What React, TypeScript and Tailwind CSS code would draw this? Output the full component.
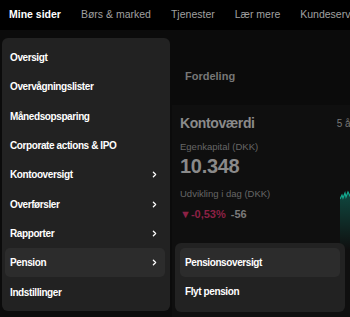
import { ChevronRight } from 'lucide-react';

const NAV = ['Børs & marked', 'Tjenester', 'Lær mere', 'Kundeservice'];

const MENU: { label: string; sub?: boolean; active?: boolean }[] = [
  { label: 'Oversigt' },
  { label: 'Overvågningslister' },
  { label: 'Månedsopsparing' },
  { label: 'Corporate actions & IPO' },
  { label: 'Kontooversigt', sub: true },
  { label: 'Overførsler', sub: true },
  { label: 'Rapporter', sub: true },
  { label: 'Pension', sub: true, active: true },
  { label: 'Indstillinger' },
];

export default function App() {
  return (
    <div className="relative w-[350px] h-[317px] overflow-hidden bg-[#0b0b0b] font-['Liberation_Sans',Arial,sans-serif]">
      {/* top nav */}
      <div className="h-[30px] bg-black flex items-center pl-[9px] gap-[20px] whitespace-nowrap text-[10.5px]">
        <span className="font-bold text-white">Mine sider</span>
        {NAV.map(n => (
          <span key={n} className="text-[#a0a0a0]">{n}</span>
        ))}
      </div>

      {/* dimmed page behind the menu */}
      <div className="flex">
        <div className="w-[172px] shrink-0" />
        <div className="flex-1 min-w-0">
          <div className="h-[75px] flex items-center pl-[13px] pt-[18px]">
            <span className="text-[11px] text-[#777] font-bold">Fordeling</span>
          </div>
          <div className="bg-[#0f0f0f] h-[220px] pl-[8px] pt-[8px]">
            <div className="flex items-center justify-between">
              <span className="text-[14px] font-bold text-[#8a8a8a] tracking-[-0.4px]">Kontoværdi</span>
              <span className="text-[10px] text-[#777] -mr-[4px]">5 år</span>
            </div>
            <div className="mt-[6px] text-[9.5px] text-[#666]">Egenkapital (DKK)</div>
            <div className="text-[20px] leading-[24px] font-bold text-[#8a8a8a] tracking-[-0.3px]">10.348</div>
            <div className="flex">
              <div className="flex-1">
                <div className="mt-[9px] text-[9.5px] text-[#666]">Udvikling i dag (DKK)</div>
                <div className="mt-[4px] flex gap-[5px] text-[11px] font-bold">
                  <span className="text-[#8c2145]">▼-0,53%</span>
                  <span className="text-[#7a7a7a]">-56</span>
                </div>
              </div>
              <svg width="12" height="60" viewBox="0 0 12 60" className="mt-[12px] -mr-[2px]">
                <defs>
                  <linearGradient id="g" x1="0" y1="0" x2="0" y2="1">
                    <stop offset="0" stopColor="#0f6e60" stopOpacity="0.6" />
                    <stop offset="1" stopColor="#0f6e60" stopOpacity="0" />
                  </linearGradient>
                </defs>
                <path d="M0 9 L2 5 L3 8 L5 3 L6 7 L8 2 L10 6 L12 4 L12 60 L0 60 Z" fill="url(#g)" />
                <path d="M0 9 L2 5 L3 8 L5 3 L6 7 L8 2 L10 6 L12 4" fill="none" stroke="#14a88e" strokeWidth="1.2" />
              </svg>
            </div>
            <div className="mt-[74px] flex text-[10px] text-[#666] font-bold">
              <span className="ml-[5px]">125</span>
              <span className="ml-[77px]">0</span>
              <span className="ml-auto">1</span>
            </div>
          </div>
        </div>
      </div>

      {/* main dropdown */}
      <div className="absolute left-[2px] top-[38px] w-[168px] h-[273px] rounded-[6px] bg-[#222222] pt-[5px] pl-[3px] pr-[5px]">
        {MENU.map(m => (
          <div
            key={m.label}
            className={`h-[29.3px] flex items-center justify-between pl-[5px] pr-[6px] rounded-[5px] ${m.active ? 'bg-[#2c2c2c]' : ''}`}
          >
            <span className="text-[10px] font-bold text-white tracking-[-0.4px]">{m.label}</span>
            {m.sub && <ChevronRight size={9} strokeWidth={3.5} className="text-white" />}
          </div>
        ))}
      </div>

      {/* submenu */}
      <div className="absolute left-[175px] top-[243px] w-[170px] h-[69px] rounded-[6px] bg-[#222222] p-[5px]">
        <div className="h-[29px] flex items-center pl-[5px] rounded-[5px] bg-[#2c2c2c]">
          <span className="text-[10px] font-bold text-white tracking-[-0.4px]">Pensionsoversigt</span>
        </div>
        <div className="h-[29px] flex items-center pl-[5px]">
          <span className="text-[10px] font-bold text-white tracking-[-0.4px]">Flyt pension</span>
        </div>
      </div>
    </div>
  );
}
